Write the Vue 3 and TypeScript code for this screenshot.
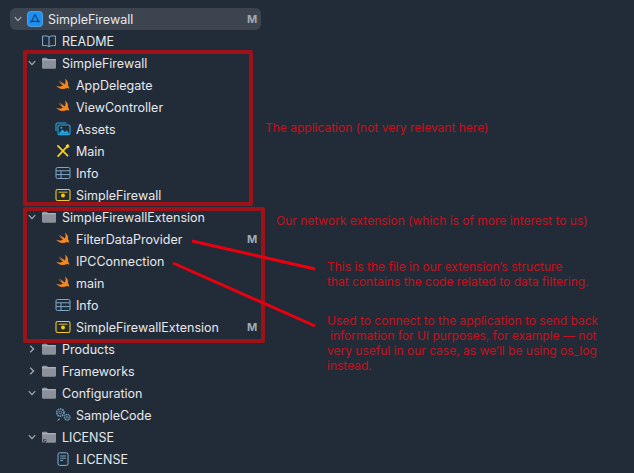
<template>
  <div class="page">
    <ul class="tree">
      <li
        v-for="row in rows"
        :key="row.id"
        class="row"
        :class="{ selected: row.id === 0 }"
        :style="{ paddingLeft: row.depth * 14 + 'px' }"
      >
        <span class="chev">
          <svg v-if="row.open !== undefined" width="8" height="8" viewBox="0 0 8 8">
            <path v-if="row.open" d="M.8 2.2 4 5.6l3.2-3.4" />
            <path v-else d="M2.2.8 5.6 4 2.2 7.2" />
          </svg>
        </span>
        <svg class="icon" width="16" height="16" viewBox="0 0 16 16">
          <template v-if="row.icon === 'app'">
            <rect x="0.5" y="0.5" width="15" height="15" rx="3" fill="#1d8ff0" stroke="#5fb6f8" stroke-width="0.7" />
            <path d="M8 3.4 4 11.6M8 3.4l4 8.2M3.4 10.4h9.2" fill="none" stroke="#0d3f73" stroke-width="1.1" />
          </template>
          <template v-else-if="row.icon === 'book'">
            <path d="M8 4C6.6 2.9 4 2.7 1.6 3v9.6c2.4-.3 5 0 6.4 1 1.4-1 4-1.3 6.4-1V3C12 2.7 9.4 2.9 8 4Zm0 0v9.6" fill="none" stroke="#86b3d2" stroke-width="1" />
          </template>
          <template v-else-if="row.icon === 'folder'">
            <path d="M1 4a1.2 1.2 0 0 1 1.2-1.2h3.4L7 4h6.8A1.2 1.2 0 0 1 15 5.2v7.4a1.2 1.2 0 0 1-1.2 1.2H2.2A1.2 1.2 0 0 1 1 12.6Z" fill="#8a919b" />
            <rect x="1" y="4.4" width="14" height="0.8" fill="#c0c5cb" />
          </template>
          <template v-else-if="row.icon === 'refFolder'">
            <path d="M1 4a1.2 1.2 0 0 1 1.2-1.2h3.4L7 4h6.8A1.2 1.2 0 0 1 15 5.2v7.4a1.2 1.2 0 0 1-1.2 1.2H2.2A1.2 1.2 0 0 1 1 12.6Z" fill="#8a919b" />
            <rect x="1" y="4.4" width="14" height="0.8" fill="#c0c5cb" />
            <path d="M2 10.4h3.2v3.2H2Z" fill="#222c38" />
            <path d="M2.8 12.8 4.6 11" stroke="#e8e8e8" stroke-width="0.9" />
          </template>
          <template v-else-if="row.icon === 'swift'">
            <path d="M10 1.5C12.5 3.5 13.6 6 13 8.2c1.2 1.6 1.4 2.8 1 3.8-.6-1-1.6-1.3-2.5-.8-2 1.1-5.5 1.3-8.3-.7-.8-.5-1.5-1.3-2-2.1 1.8 1.3 4.8 1.6 6.8.4-2-1.6-3.7-3.4-5-5 1.7 1.5 3.5 2.8 4.6 3.5C6.2 5.8 5 4.2 4.2 3c2 2 4.1 3.5 5.6 4.4 1-1.8 1-3.9.2-5.9Z" fill="#f5851f" />
          </template>
          <template v-else-if="row.icon === 'assets'">
            <path d="M1 10V3.4A1.4 1.4 0 0 1 2.4 2h9.2" fill="none" stroke="#27a7e0" stroke-width="1.1" />
            <rect x="3" y="4" width="12" height="9.6" rx="1.4" fill="#222c38" stroke="#27a7e0" stroke-width="1.1" />
            <path d="M3.6 12.8 7.4 8.6l2.4 2.4 1.8-1.4 3 3.2Z" fill="#27a7e0" />
            <circle cx="6.4" cy="6.8" r="1" fill="#27a7e0" />
          </template>
          <template v-else-if="row.icon === 'main'">
            <path d="M2.4 2.4 13 13.2" fill="none" stroke="#f7d21a" stroke-width="1.7" />
            <path d="M13.4 2.2 2.6 13.6" fill="none" stroke="#f7d21a" stroke-width="1.7" />
            <path d="M10.6 2.6 13 1l1.6 2.2-2 2.2Z" fill="#f7d21a" />
          </template>
          <template v-else-if="row.icon === 'table'">
            <rect x="1" y="2.5" width="14" height="11" rx="1.4" fill="none" stroke="#7fa8c6" stroke-width="1" />
            <path d="M1 5.8h14M1 9.6h14M6 5.8v7.7" fill="none" stroke="#7fa8c6" stroke-width="1" />
          </template>
          <template v-else-if="row.icon === 'entitlement'">
            <rect x="1" y="2.5" width="14" height="11" rx="1.6" fill="none" stroke="#f2cb1d" stroke-width="1.1" />
            <path d="M3.6 5.2h8.8" stroke="#f2cb1d" stroke-width="0.9" />
            <circle cx="8" cy="8.6" r="2" fill="#f2cb1d" />
          </template>
          <template v-else-if="row.icon === 'gears'">
            <circle cx="5.4" cy="5.6" r="3.6" fill="none" stroke="#6fa3c4" stroke-width="1.6" stroke-dasharray="1.6 0.7" />
            <circle cx="5.4" cy="5.6" r="1.4" fill="none" stroke="#6fa3c4" stroke-width="0.8" />
            <circle cx="12.2" cy="10.2" r="2.8" fill="none" stroke="#6fa3c4" stroke-width="1.4" stroke-dasharray="1.3 0.6" />
            <circle cx="12.2" cy="10.2" r="1" fill="none" stroke="#6fa3c4" stroke-width="0.7" />
            <path d="M2 11h3.4v3.4H2Z" fill="#222c38" />
            <path d="M2.8 13.6 4.6 11.6" stroke="#e8e8e8" stroke-width="0.9" />
          </template>
          <template v-else-if="row.icon === 'doc'">
            <rect x="3" y="1.8" width="10" height="12.6" rx="1.6" fill="none" stroke="#7fb3d6" stroke-width="1" />
            <path d="M5.2 5h5.6M5.2 7.2h5.6M5.2 9.4h3" stroke="#7fb3d6" stroke-width="0.9" />
          </template>
        </svg>
        <span class="label">{{ row.name }}</span>
        <span v-if="row.modified" class="badge">M</span>
      </li>
    </ul>

    <div class="frame frame-app"></div>
    <div class="frame frame-ext"></div>

    <svg class="arrows" width="634" height="473" viewBox="0 0 634 473">
      <path d="M192 241 315 269" />
      <path d="M173 263 315 326" />
    </svg>

    <p
      v-for="note in notes"
      :key="note.text"
      class="note"
      :style="{ left: note.x + 'px', top: note.y + 'px' }"
    >{{ note.text }}</p>
  </div>
</template>

<script setup lang="ts">
interface Row {
  id: number
  name: string
  depth: number
  icon: string
  open?: boolean
  modified?: boolean
}

const rows: Row[] = [
  { id: 0, name: 'SimpleFirewall', depth: 0, icon: 'app', open: true, modified: true },
  { id: 1, name: 'README', depth: 1, icon: 'book' },
  { id: 2, name: 'SimpleFirewall', depth: 1, icon: 'folder', open: true },
  { id: 3, name: 'AppDelegate', depth: 2, icon: 'swift' },
  { id: 4, name: 'ViewController', depth: 2, icon: 'swift' },
  { id: 5, name: 'Assets', depth: 2, icon: 'assets' },
  { id: 6, name: 'Main', depth: 2, icon: 'main' },
  { id: 7, name: 'Info', depth: 2, icon: 'table' },
  { id: 8, name: 'SimpleFirewall', depth: 2, icon: 'entitlement' },
  { id: 9, name: 'SimpleFirewallExtension', depth: 1, icon: 'folder', open: true },
  { id: 10, name: 'FilterDataProvider', depth: 2, icon: 'swift', modified: true },
  { id: 11, name: 'IPCConnection', depth: 2, icon: 'swift' },
  { id: 12, name: 'main', depth: 2, icon: 'swift' },
  { id: 13, name: 'Info', depth: 2, icon: 'table' },
  { id: 14, name: 'SimpleFirewallExtension', depth: 2, icon: 'entitlement', modified: true },
  { id: 15, name: 'Products', depth: 1, icon: 'folder', open: false },
  { id: 16, name: 'Frameworks', depth: 1, icon: 'folder', open: false },
  { id: 17, name: 'Configuration', depth: 1, icon: 'folder', open: true },
  { id: 18, name: 'SampleCode', depth: 2, icon: 'gears' },
  { id: 19, name: 'LICENSE', depth: 1, icon: 'refFolder', open: true },
  { id: 20, name: 'LICENSE', depth: 2, icon: 'doc' }
]

const notes = [
  { x: 265, y: 120, text: 'The application (not very relevant here)' },
  { x: 276, y: 213, text: 'Our network extension (which is of more interest to us)' },
  { x: 327, y: 259, text: 'This is the file in our extension’s structure' },
  { x: 327, y: 274, text: 'that contains the code related to data filtering.' },
  { x: 327, y: 313, text: 'Used to connect to the application to send back' },
  { x: 330, y: 328, text: 'information for UI purposes, for example — not' },
  { x: 327, y: 343, text: 'very useful in our case, as we’ll be using os_log' },
  { x: 327, y: 358, text: 'instead.' }
]
</script>

<style>
html,
body {
  margin: 0;
  background: #222c38;
}
</style>

<style scoped>
.page {
  position: relative;
  width: 634px;
  height: 473px;
  overflow: hidden;
  background: #222c38;
  font-family: Inter, "Liberation Sans", sans-serif;
}

.tree {
  list-style: none;
  margin: 0;
  padding: 8px 0 0 10px;
  width: 251px;
}

.row {
  display: flex;
  align-items: center;
  height: 22px;
  color: #e6e8eb;
  font-size: 12.5px;
}

.row.selected {
  background: #3c4450;
  border-radius: 6px;
}

.chev {
  flex: none;
  display: flex;
  width: 17px;
  padding-left: 4px;
  box-sizing: border-box;
}

.chev path {
  fill: none;
  stroke: #a9afb7;
  stroke-width: 1.2;
}

.icon {
  flex: none;
  margin-right: 5px;
}

.label {
  flex: 1;
  white-space: nowrap;
}

.badge {
  margin-right: 4px;
  width: 10px;
  color: #a3a9b2;
  font-size: 11px;
  font-weight: 700;
}

.frame {
  position: absolute;
  box-sizing: border-box;
  border: 4px solid #9c1218;
  border-radius: 2px;
}

.frame-app {
  left: 23px;
  top: 50px;
  width: 230px;
  height: 156px;
}

.frame-ext {
  left: 23px;
  top: 207px;
  width: 242px;
  height: 136px;
}

.arrows {
  position: absolute;
  left: 0;
  top: 0;
}

.arrows path {
  fill: none;
  stroke: #e8000e;
  stroke-width: 3;
}

.note {
  position: absolute;
  margin: 0;
  color: #c7101c;
  font-size: 12px;
  line-height: 15px;
  white-space: nowrap;
}
</style>
